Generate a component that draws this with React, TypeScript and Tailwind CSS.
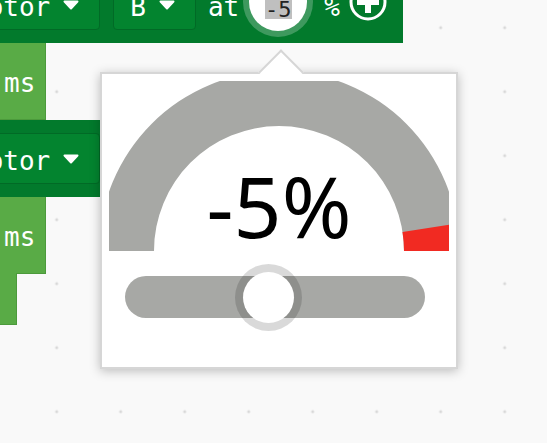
import type { ReactNode } from 'react';

function Caret() {
  return (
    <svg width="16" height="10" viewBox="0 0 16 10" className="shrink-0">
      <path d="M1.5 1.5 H14.5 L8 8.5 Z" fill="#fff" stroke="#fff" strokeWidth="2" strokeLinejoin="round" />
    </svg>
  );
}

function Dropdown({ label, className }: { label: string; className?: string }) {
  return (
    <div
      className={`flex h-[51px] shrink-0 items-center gap-[13px] rounded-[4px] border border-[#016a26] bg-[#03842f] pl-4 pr-5 ${className ?? ''}`}
    >
      <span className="mt-[5px]">{label}</span>
      <Caret />
    </div>
  );
}

function PauseBlock({ children }: { children?: ReactNode }) {
  return (
    <div className="flex h-[77px] items-center border-b border-r border-[#4c9a3c] bg-[#59ab46] pl-[4px] pr-[10px]">
      {children}
    </div>
  );
}

export default function App() {
  return (
    <div className="relative h-[443px] w-[547px] overflow-hidden bg-[#f9f9f9] bg-[radial-gradient(circle,#d8d8d8_1.2px,transparent_1.8px)] bg-size-[64px_64px] bg-position-[24.7px_-4.3px] font-['DejaVu_Sans_Mono',monospace] text-[26px] text-white">
      {/* block stack */}
      <div className="absolute left-0 top-[-34px] flex flex-col items-start">
        <div className="flex h-[77px] w-[403px] items-center bg-[#027a2c]">
          <Dropdown label="motor" className="ml-[-45px]" />
          <Dropdown label="B" className="ml-[13px]" />
          <span className="ml-[12px] mt-[5px]">at</span>
          <div className="ml-[10px] -mt-[5px] flex h-[58px] w-[58px] shrink-0 justify-center rounded-full bg-white pt-[20px] shadow-[0_0_0_6px_rgba(255,255,255,0.24)]">
            <span className="h-[26px] bg-[#bfbfbf] text-[22px] leading-normal text-[#222]">-5</span>
          </div>
          <span className="ml-[17px] mt-[5px]">%</span>
          <svg width="38" height="38" viewBox="0 0 38 38" className="ml-[9px] -mt-[5px] shrink-0">
            <circle cx="19" cy="19" r="17" fill="none" stroke="#fff" strokeWidth="3" />
            <path d="M8 19 H30 M19 8 V30" stroke="#fff" strokeWidth="6" />
          </svg>
        </div>
        <PauseBlock>
          <span className="mt-[5px]">ms</span>
        </PauseBlock>
        <div className="flex h-[77px] w-[200px] items-center bg-[#027a2c]">
          <Dropdown label="motor" className="ml-[-45px]" />
        </div>
        <div className="h-[76px]">
          <PauseBlock>
            <span className="mt-[5px]">ms</span>
          </PauseBlock>
        </div>
        <div className="h-[52px] w-[17px] border-b border-r border-[#4c9a3c] bg-[#59ab46]" />
      </div>

      {/* speed picker popover */}
      <div className="absolute left-[100px] top-[72px] h-[297px] w-[358px] border-2 border-[#d6d6d6] bg-white shadow-[0_2px_10px_rgba(0,0,0,0.25)]">
        <div className="absolute left-[163px] top-[-18px] h-8 w-8 rotate-45 border-l-2 border-t-2 border-[#d6d6d6] bg-white" />
        <div className="relative flex flex-col items-start pl-[7px] pt-[7px]">
          <svg width="340" height="170" viewBox="0 0 340 170" className="overflow-hidden">
            <path d="M-10 170 A180 180 0 0 1 350 170 L295 170 A125 125 0 0 0 45 170 Z" fill="#a7a8a5" />
            <path d="M350 170 A180 180 0 0 0 347.9 142.5 L293.5 150.9 A125 125 0 0 1 295 170 Z" fill="#f12a22" />
            <text x="170" y="157" textAnchor="middle" fontSize="84" fontFamily="'Noto Sans', sans-serif" fill="#000">
              -5%
            </text>
          </svg>
          <div className="relative ml-[16px] mt-[25px] h-[42px] w-[300px] rounded-full bg-[#a7a8a5]">
            <div className="absolute left-[118px] top-[-4px] h-[51px] w-[51px] rounded-full bg-white shadow-[0_0_0_8px_rgba(0,0,0,0.15)]" />
          </div>
        </div>
      </div>
    </div>
  );
}
